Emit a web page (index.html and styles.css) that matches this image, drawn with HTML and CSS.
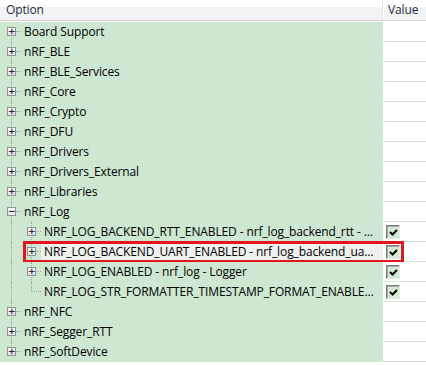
FILE: index.html
```html
<!DOCTYPE html>
<html lang="en">
<head>
  <meta charset="UTF-8">
  <title>Options</title>
  <link rel="stylesheet" href="styles.css">
</head>
<body>

<div class="grid">
  <div class="head">
    <div class="col-opt">Option</div>
    <div class="col-val">Value</div>
  </div>

  <div class="rows">
    <div class="row">
      <div class="opt"><span class="tw first"><span class="exp">+</span></span><span class="label">Board Support</span></div>
      <div class="val"></div>
    </div>
    <div class="row">
      <div class="opt"><span class="tw mid"><span class="exp">+</span></span><span class="label">nRF_BLE</span></div>
      <div class="val"></div>
    </div>
    <div class="row">
      <div class="opt"><span class="tw mid"><span class="exp">+</span></span><span class="label">nRF_BLE_Services</span></div>
      <div class="val"></div>
    </div>
    <div class="row">
      <div class="opt"><span class="tw mid"><span class="exp">+</span></span><span class="label">nRF_Core</span></div>
      <div class="val"></div>
    </div>
    <div class="row">
      <div class="opt"><span class="tw mid"><span class="exp">+</span></span><span class="label">nRF_Crypto</span></div>
      <div class="val"></div>
    </div>
    <div class="row">
      <div class="opt"><span class="tw mid"><span class="exp">+</span></span><span class="label">nRF_DFU</span></div>
      <div class="val"></div>
    </div>
    <div class="row">
      <div class="opt"><span class="tw mid"><span class="exp">+</span></span><span class="label">nRF_Drivers</span></div>
      <div class="val"></div>
    </div>
    <div class="row">
      <div class="opt"><span class="tw mid"><span class="exp">+</span></span><span class="label">nRF_Drivers_External</span></div>
      <div class="val"></div>
    </div>
    <div class="row">
      <div class="opt"><span class="tw mid"><span class="exp">+</span></span><span class="label">nRF_Libraries</span></div>
      <div class="val"></div>
    </div>
    <div class="row">
      <div class="opt"><span class="tw mid"><span class="exp">&minus;</span></span><span class="label">nRF_Log</span></div>
      <div class="val"></div>
    </div>

    <div class="row">
      <div class="opt"><span class="tw pipe"></span><span class="tw mid"><span class="exp">+</span></span><span class="label">NRF_LOG_BACKEND_RTT_ENABLED - nrf_log_backend_rtt - Log RTT backend</span></div>
      <div class="val"><span class="check"><svg width="11" height="11" viewBox="0 0 11 11"><polyline points="2,5 4.5,7.5 9,3" fill="none" stroke="#000" stroke-width="2"/></svg></span></div>
    </div>
    <div class="row selected">
      <div class="opt"><span class="tw pipe"></span><span class="tw mid"><span class="exp">+</span></span><span class="label">NRF_LOG_BACKEND_UART_ENABLED - nrf_log_backend_uart - Log UART backend</span></div>
      <div class="val"><span class="check"><svg width="11" height="11" viewBox="0 0 11 11"><polyline points="2,5 4.5,7.5 9,3" fill="none" stroke="#000" stroke-width="2"/></svg></span></div>
      <div class="mark"></div>
    </div>
    <div class="row">
      <div class="opt"><span class="tw pipe"></span><span class="tw mid"><span class="exp">+</span></span><span class="label">NRF_LOG_ENABLED - nrf_log - Logger</span></div>
      <div class="val"><span class="check"><svg width="11" height="11" viewBox="0 0 11 11"><polyline points="2,5 4.5,7.5 9,3" fill="none" stroke="#000" stroke-width="2"/></svg></span></div>
    </div>
    <div class="row">
      <div class="opt"><span class="tw pipe"></span><span class="tw last"></span><span class="label">NRF_LOG_STR_FORMATTER_TIMESTAMP_FORMAT_ENABLED - Enable timestamp formatting</span></div>
      <div class="val"><span class="check"><svg width="11" height="11" viewBox="0 0 11 11"><polyline points="2,5 4.5,7.5 9,3" fill="none" stroke="#000" stroke-width="2"/></svg></span></div>
    </div>

    <div class="row">
      <div class="opt"><span class="tw mid"><span class="exp">+</span></span><span class="label">nRF_NFC</span></div>
      <div class="val"></div>
    </div>
    <div class="row">
      <div class="opt"><span class="tw mid"><span class="exp">+</span></span><span class="label">nRF_Segger_RTT</span></div>
      <div class="val"></div>
    </div>
    <div class="row">
      <div class="opt"><span class="tw last"><span class="exp">+</span></span><span class="label">nRF_SoftDevice</span></div>
      <div class="val"></div>
    </div>
  </div>
</div>

</body>
</html>
```

FILE: styles.css
```css
* {
  box-sizing: border-box;
  margin: 0;
  padding: 0;
}

body {
  background: #fff;
  font-family: 'Open Sans', sans-serif;
  font-size: 12px;
  letter-spacing: -0.12px;
  color: #000;
}

.grid {
  width: 426px;
  height: 365px;
  overflow: hidden;
}

.head {
  display: flex;
  height: 21px;
  border-bottom: 1px solid #d5d5d5;
  background: linear-gradient(to bottom, #fff 0, #fff 7px, #f3f4f6 7px, #f1f2f4 100%);
  color: #1e2b3e;
  line-height: 20px;
}

.col-opt {
  width: 383px;
  padding-left: 6px;
  border-right: 1px solid #e2e3e5;
}

.col-val {
  flex: 1;
  padding-left: 4px;
  border-left: 1px solid #fff;
}

.rows {
  padding-top: 1px;
}

.row {
  display: flex;
  height: 20px;
  position: relative;
}

.opt {
  width: 383px;
  display: flex;
  background: #cde7d0;
  padding-left: 1px;
}

.val {
  flex: 1;
  border-bottom: 1px solid #d3e6d5;
  background: #fff;
  padding: 3px 0 0 3px;
}

.label {
  flex: 1;
  min-width: 0;
  padding: 0 5px 0 3px;
  line-height: 19px;
  white-space: nowrap;
  overflow: hidden;
  text-overflow: ellipsis;
}

.selected .label {
  background: #eff1ef;
}

/* tree guide lines */
.tw {
  width: 20px;
  flex: none;
  position: relative;
}

.tw::before,
.tw::after {
  content: "";
  position: absolute;
}

.tw::before {
  left: 10px;
  border-left: 1px dotted #a3a3a3;
}

.tw::after {
  left: 11px;
  right: 0;
  top: 9px;
  border-top: 1px dotted #a3a3a3;
}

.tw.pipe::before,
.tw.mid::before {
  top: 0;
  bottom: 0;
}

.tw.pipe::after {
  display: none;
}

.tw.first::before {
  top: 9px;
  bottom: 0;
}

.tw.last::before {
  top: 0;
  height: 10px;
}

.exp {
  position: absolute;
  z-index: 1;
  left: 6px;
  top: 5px;
  width: 9px;
  height: 9px;
  border: 1px solid #919191;
  background: linear-gradient(to bottom, #fff, #e2e2e2);
  font-family: 'DejaVu Sans', sans-serif;
  font-size: 9px;
  line-height: 7px;
  letter-spacing: 0;
  text-align: center;
  color: #2a2a2a;
  font-weight: bold;
}

.check {
  display: block;
  width: 14px;
  height: 14px;
  border: 1px solid;
  border-color: #7c7c7c #e8e8e8 #e8e8e8 #7c7c7c;
  box-shadow: inset 1px 1px 0 #a8a8a8;
  background: #d3ead3;
  padding: 1px 0 0 1px;
}

.check svg {
  display: block;
}

.mark {
  position: absolute;
  left: 23px;
  top: -1px;
  width: 381px;
  height: 22px;
  border: 3px solid #e3151f;
}
```
